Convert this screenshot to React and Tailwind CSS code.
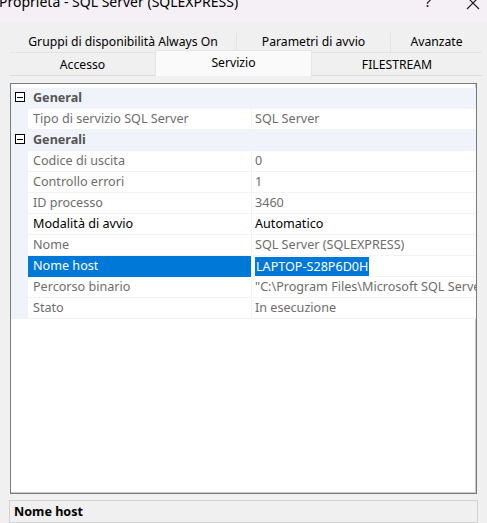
const rows = [
  { type: "cat", label: "General" },
  { name: "Tipo di servizio SQL Server", value: "SQL Server" },
  { type: "cat", label: "Generali" },
  { name: "Codice di uscita", value: "0" },
  { name: "Controllo errori", value: "1" },
  { name: "ID processo", value: "3460" },
  { name: "Modalità di avvio", value: "Automatico", editable: true },
  { name: "Nome", value: "SQL Server (SQLEXPRESS)" },
  { name: "Nome host", value: "LAPTOP-S28P6D0H", selected: true },
  { name: "Percorso binario", value: "\"C:\\Program Files\\Microsoft SQL Server\\MSSQL16.SQLEXPRESS\\MSSQL\\Binn\\sqlservr.exe\" -sSQLEXPRESS" },
  { name: "Stato", value: "In esecuzione" },
];

function Expander() {
  return (
    <div className="flex h-[10px] w-[10px] items-center justify-center border border-black bg-white">
      <div className="h-px w-[6px] bg-black" />
    </div>
  );
}

function PropertyRow({ row }) {
  if (row.type === "cat") {
    return (
      <div className="flex h-[21px] items-center bg-[#f0f4fa]">
        <div className="flex w-[17px] items-center justify-center self-stretch pb-[3px]">
          <Expander />
        </div>
        <div className="pl-[5px] font-bold text-[#555555]">{row.label}</div>
      </div>
    );
  }
  const tone = row.editable ? "text-black" : "text-[#6d6d6d]";
  return (
    <div className="flex h-[21px]">
      <div className="w-[17px] bg-[#f0f4fa]" />
      <div
        className={
          row.selected
            ? "flex w-[223px] items-center bg-[#0078d7] pl-[5px] text-white"
            : `flex w-[223px] items-center border-b border-[#f3f3f3] bg-white pl-[5px] ${tone}`
        }
      >
        <span className="truncate">{row.name}</span>
      </div>
      <div className="flex min-w-0 flex-1 items-center overflow-hidden whitespace-nowrap border-b border-l border-[#f3f3f3] bg-white pl-[3px]">
        {row.selected ? (
          <span className="bg-[#0078d7] px-px leading-[19px] text-white">{row.value}</span>
        ) : (
          <span className={tone}>{row.value}</span>
        )}
      </div>
    </div>
  );
}

export default function App() {
  return (
    <div
      className="flex h-[523px] w-[487px] flex-col overflow-hidden bg-[#f0f0f0] text-[12.6px] text-[#1a1a1a]"
      style={{ fontFamily: "'Noto Sans', 'Open Sans', sans-serif" }}
    >
      {/* title bar */}
      <div className="flex h-[22px] shrink-0 items-start bg-[#f5f0f5]">
        <div className="-ml-[1px] -mt-[9px] flex-1 text-[14px] text-black">Proprietà - SQL Server (SQLEXPRESS)</div>
        <div className="-mt-[9px] w-[40px] text-[14px] text-black">?</div>
        <svg width="16" height="16" viewBox="0 0 16 16" className="-mt-[5px] mr-[6px]" fill="none" stroke="#222" strokeWidth="1.2">
          <path d="M2 2 L14 14 M14 2 L2 14" />
        </svg>
      </div>

      {/* tabs */}
      <div className="mt-[11px] ml-[10px] mr-[5px] flex h-[20px] border-b border-[#e3e3e3] text-[12.2px] text-black">
        <div className="flex w-[227px] items-center justify-center border-r border-[#e3e3e3]">Gruppi di disponibilità Always On</div>
        <div className="flex w-[154px] items-center justify-center border-r border-[#e3e3e3]">Parametri di avvio</div>
        <div className="flex flex-1 items-center justify-center">Avanzate</div>
      </div>
      <div className="ml-[10px] mr-[5px] flex h-[23px] border-b border-[#dcdcdc] text-[12.2px] text-black">
        <div className="flex w-[145px] items-center justify-center pt-[2px]">Accesso</div>
        <div className="-mt-[3px] flex h-[26px] w-[157px] items-start justify-center border-x border-t border-[#e6e6e6] bg-[#fafafa] pt-[3px]">Servizio</div>
        <div className="flex flex-1 items-center justify-center pt-[2px]">FILESTREAM</div>
      </div>

      {/* property grid */}
      <div className="mx-[10px] mt-[7px] flex h-[411px] flex-col border border-[#7b7b7b] bg-white pt-[4px] shadow-[inset_-1px_-1px_0_#c8c8c8]">
        {rows.map((row, i) => (
          <PropertyRow key={i} row={row} />
        ))}
      </div>

      {/* description */}
      <div className="mx-[9px] mt-[6px] flex-1 border border-[#d2d2d2] bg-[#f0f0f0] px-[4px] pt-[2px] font-bold text-black">
        Nome host
      </div>
    </div>
  );
}
